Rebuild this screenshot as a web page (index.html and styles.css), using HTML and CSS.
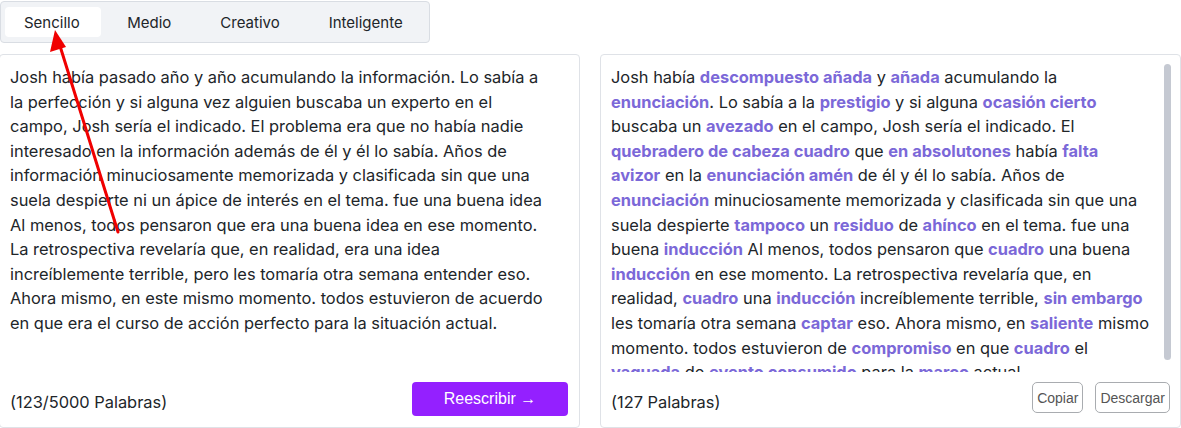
FILE: index.html
```html
<!DOCTYPE html>
<html lang="es">
<head>
<meta charset="utf-8">
<link rel="stylesheet" href="styles.css">
</head>
<body>
<div class="page">
  <div class="tabs">
    <div class="tab active">Sencillo</div>
    <div class="tab">Medio</div>
    <div class="tab">Creativo</div>
    <div class="tab">Inteligente</div>
  </div>
  <div class="panels">
    <div class="panel">
      <div class="text input">Josh había pasado año y año acumulando la información. Lo sabía a la perfección y si alguna vez alguien buscaba un experto en el campo, Josh sería el indicado. El problema era que no había nadie interesado en la información además de él y él lo sabía. Años de información minuciosamente memorizada y clasificada sin que una suela despierte ni un ápice de interés en el tema. fue una buena idea Al menos, todos pensaron que era una buena idea en ese momento. La retrospectiva revelaría que, en realidad, era una idea increíblemente terrible, pero les tomaría otra semana entender eso. Ahora mismo, en este mismo momento. todos estuvieron de acuerdo en que era el curso de acción perfecto para la situación actual.</div>
      <div class="footer">
        <span class="count">(123/5000 Palabras)</span>
        <button class="primary">Reescribir →</button>
      </div>
    </div>
    <div class="panel">
      <div class="text output">Josh había <b>descompuesto añada</b> y <b>añada</b> acumulando la <b>enunciación</b>. Lo sabía a la <b>prestigio</b> y si alguna <b>ocasión cierto</b> buscaba un <b>avezado</b> en el campo, Josh sería el indicado. El <b>quebradero de cabeza cuadro</b> que <b>en absolutones</b> había <b>falta avizor</b> en la <b>enunciación amén</b> de él y él lo sabía. Años de <b>enunciación</b> minuciosamente memorizada y clasificada sin que una suela despierte <b>tampoco</b> un <b>residuo</b> de <b>ahínco</b> en el tema. fue una buena <b>inducción</b> Al menos, todos pensaron que <b>cuadro</b> una buena <b>inducción</b> en ese momento. La retrospectiva revelaría que, en realidad, <b>cuadro</b> una <b>inducción</b> increíblemente terrible, <b>sin embargo</b> les tomaría otra semana <b>captar</b> eso. Ahora mismo, en <b>saliente</b> mismo momento. todos estuvieron de <b>compromiso</b> en que <b>cuadro</b> el <b>vaguada</b> de <b>evento consumido</b> para la <b>marco</b> actual.</div>
      <div class="thumb"></div>
      <div class="footer">
        <span class="count">(127 Palabras)</span>
        <div class="actions">
          <button class="ghost">Copiar</button>
          <button class="ghost">Descargar</button>
        </div>
      </div>
    </div>
  </div>
  <svg class="arrow" width="140" height="240" viewBox="0 0 140 240">
    <line x1="118" y1="232" x2="60" y2="46" stroke="#f00000" stroke-width="3" stroke-linecap="round"/>
    <polygon points="55,30 50,52 66,47" fill="#f00000"/>
  </svg>
</div>
</body>
</html>
```
FILE: styles.css
```css
* { box-sizing: border-box; }
html, body { margin: 0; padding: 0; background: #ffffff; }
body { font-family: Inter, "Noto Sans", sans-serif; color: #212529; }
.page { position: relative; width: 1181px; height: 428px; padding-top: 1px; overflow: hidden; }
.tabs {
  display: inline-flex; gap: 4px; padding: 5px 4px;
  background: #f1f3f6; border: 1px solid #d9dde3;
  border-radius: 4px; height: 42px;
}
.tab { padding: 1px 22.5px 0; font-size: 15px; line-height: 29px; border-radius: 4px; color: #212529; }
.tab.active { background: #ffffff; padding: 1px 21px 0 19px; }
.panels { display: flex; gap: 20px; margin-top: 11px; margin-left: -1px; height: 374px; }
.panel {
  position: relative; flex: 1; display: flex; flex-direction: column;
  border: 1px solid #dfe2e7; border-radius: 4px; padding: 10px 10px 11px 10px;
}
.text { font-size: 16.4px; line-height: 24.6px; color: #212529; }
.input { flex: 1; padding-right: 19.5px; }
.output { flex: 1; min-height: 0; overflow: hidden; margin-bottom: 10px; padding-right: 19.2px; }
.output b { color: #7b68d8; font-weight: 700; }
.thumb {
  position: absolute; top: 9px; right: 9px; width: 7px; height: 296px;
  background: #c5c9d2; border-radius: 4px;
}
.footer { display: flex; align-items: center; justify-content: space-between; height: 34px; flex: none; }
.count { font-size: 16.4px; color: #212529; padding-top: 5px; }
.primary {
  width: 156px; height: 34px; background: #9420ff; color: #fff; border: none; border-radius: 4px;
  font-family: "Liberation Sans", Arial, sans-serif; font-size: 16px; margin-right: 1px;
}
.actions { display: flex; gap: 12px; align-self: flex-start; }
.ghost {
  height: 31px; padding: 0 4px; background: #fff; border: 1px solid #a9acb0; border-radius: 5px;
  font-family: "Liberation Sans", Arial, sans-serif; font-size: 14px; color: #555;
}
.arrow { position: absolute; left: 0; top: 0; pointer-events: none; }
```
